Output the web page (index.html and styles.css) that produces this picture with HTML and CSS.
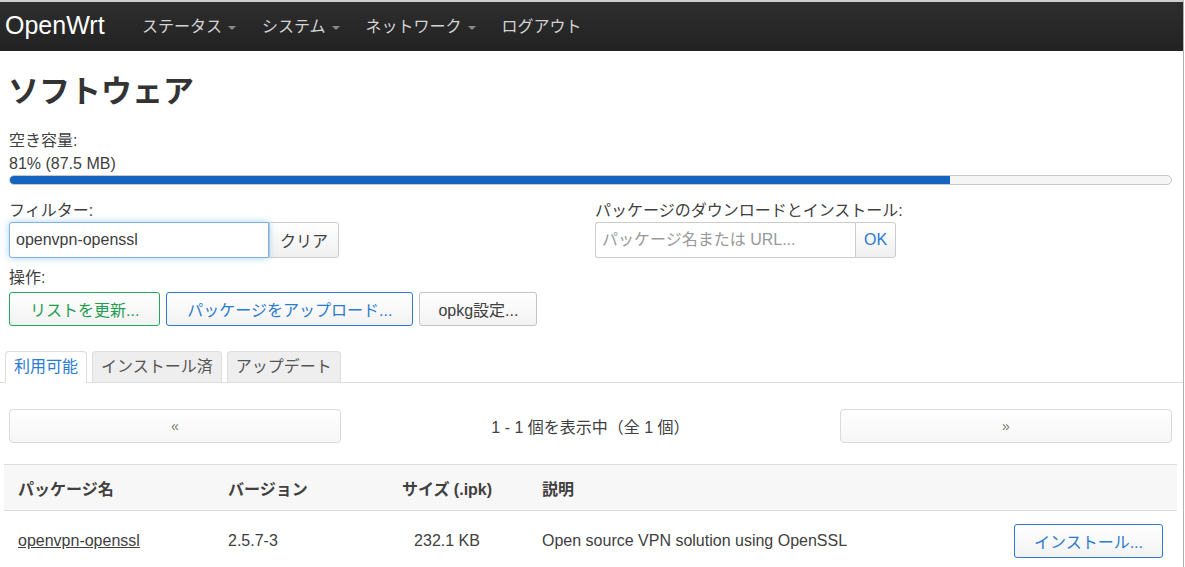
FILE: index.html
```
<!DOCTYPE html>
<html lang="ja">
<head>
<meta charset="utf-8">
<title>ソフトウェア - OpenWrt</title>
<link rel="stylesheet" href="styles.css">
</head>
<body>
<div class="frame">
  <header class="navbar">
    <a class="brand" href="#">OpenWrt</a>
    <ul class="nav">
      <li><span>ステータス</span><i class="caret"></i></li>
      <li><span>システム</span><i class="caret"></i></li>
      <li><span>ネットワーク</span><i class="caret"></i></li>
      <li><span>ログアウト</span></li>
    </ul>
  </header>
  <main class="main">
    <h2 class="title">ソフトウェア</h2>
    <div class="storage">
      <div class="lbl">空き容量:</div>
      <div class="lbl">81% (87.5 MB)</div>
      <div class="bar"><div class="fill" style="width:81%"></div></div>
    </div>
    <div class="controls">
      <div class="ctl">
        <div class="lbl">フィルター:</div>
        <div class="group">
          <input class="inp focus" type="text" value="openvpn-openssl">
          <button class="addon">クリア</button>
        </div>
      </div>
      <div class="ctl">
        <div class="lbl">パッケージのダウンロードとインストール:</div>
        <div class="group">
          <input class="inp" type="text" placeholder="パッケージ名または URL...">
          <button class="addon blue">OK</button>
        </div>
      </div>
    </div>
    <div class="actions">
      <div class="lbl">操作:</div>
      <div class="btns">
        <button class="btn green">リストを更新...</button>
        <button class="btn blue">パッケージをアップロード...</button>
        <button class="btn gray">opkg設定...</button>
      </div>
    </div>
    <ul class="tabs">
      <li class="tab active">利用可能</li>
      <li class="tab">インストール済</li>
      <li class="tab">アップデート</li>
    </ul>
    <div class="pager">
      <button class="pbtn">&laquo;</button>
      <div class="pinfo">1 - 1 個を表示中（全 1 個）</div>
      <button class="pbtn">&raquo;</button>
    </div>
    <table class="pkgs">
      <colgroup>
        <col class="c1"><col class="c2"><col class="c3"><col class="c4"><col class="c5">
      </colgroup>
      <thead>
        <tr><th>パッケージ名</th><th>バージョン</th><th class="ctr">サイズ (.ipk)</th><th>説明</th><th></th></tr>
      </thead>
      <tbody>
        <tr>
          <td><a href="#" class="plink">openvpn-openssl</a></td>
          <td>2.5.7-3</td>
          <td class="ctr">232.1 KB</td>
          <td>Open source VPN solution using OpenSSL</td>
          <td class="right"><button class="btn blue install">インストール...</button></td>
        </tr>
      </tbody>
    </table>
  </main>
</div>
</body>
</html>
```
FILE: styles.css
```
html, body {
  margin: 0;
  padding: 0;
  background: #fff;
}
body {
  font-family: "Liberation Sans", Arial, "Noto Sans CJK JP", sans-serif;
  font-size: 16px;
  color: #404040;
}
.frame {
  width: 1183px;
  min-height: 565px;
  border-top: 2px solid #cfcfcf;
  border-right: 1px solid #b0b0b0;
  overflow: hidden;
}
.navbar {
  height: 49px;
  background: linear-gradient(#2e2e2e, #222);
  display: flex;
  align-items: center;
}
.brand {
  color: #fff;
  text-decoration: none;
  font-size: 25px;
  padding-left: 5px;
  width: 124px;
  line-height: 30px;
  margin-top: -3px;
}
.nav {
  list-style: none;
  margin: 0;
  padding: 0;
  display: flex;
}
.nav li {
  padding: 0 13px;
  color: #d4d4d4;
  display: flex;
  align-items: center;
  line-height: 24px;
}
.caret {
  display: inline-block;
  width: 0;
  height: 0;
  border-left: 4px solid transparent;
  border-right: 4px solid transparent;
  border-top: 4px solid #8a8a8a;
  margin-left: 6px;
  margin-top: 2px;
}
.main {
  padding: 0 11px 0 9px;
}
.title {
  margin: 23px 0 0 -1px;
  font-size: 31px;
  line-height: 36px;
  font-weight: 700;
  color: #333;
}
.lbl {
  line-height: 23px;
}
.storage {
  margin-top: 19px;
}
.bar {
  height: 8px;
  border: 1px solid #c8c8c8;
  border-radius: 5px;
  background: #f5f5f5;
  overflow: hidden;
}
.fill {
  height: 100%;
  background: #1565c0;
}
.controls {
  display: grid;
  grid-template-columns: 1fr 1fr;
  column-gap: 9px;
  margin-top: 14px;
}
.group {
  display: flex;
}
.inp {
  box-sizing: border-box;
  width: 260px;
  height: 36px;
  border: 1px solid #ccc;
  border-right: none;
  border-radius: 3px 0 0 3px;
  padding: 0 6px;
  font-family: inherit;
  font-size: 16px;
  color: #404040;
  outline: none;
}
.inp::placeholder {
  color: #999;
}
.inp.focus {
  border: 1px solid #7db3ea;
  box-shadow: 0 0 7px rgba(102, 175, 233, 0.55);
  position: relative;
  z-index: 1;
}
.addon {
  box-sizing: border-box;
  height: 36px;
  padding: 0 10px;
  border: 1px solid #ccc;
  border-radius: 0 3px 3px 0;
  background: linear-gradient(#fff, #f0f0f0);
  font-family: inherit;
  font-size: 16px;
  color: #404040;
  white-space: nowrap;
}
.addon.blue {
  color: #2a7ad2;
  padding: 0 8px;
}
.actions {
  margin-top: 8px;
}
.btns {
  display: flex;
  gap: 6px;
  margin-top: 3px;
}
.btn {
  box-sizing: border-box;
  height: 34px;
  padding: 0 20px;
  border: 1px solid #c4c4c4;
  border-radius: 3px;
  background: linear-gradient(#fff, #f2f2f2);
  font-family: inherit;
  font-size: 16px;
  color: #404040;
  white-space: nowrap;
}
.btn.gray {
  padding: 0 18px;
}
.btn.green {
  border-color: #22a85a;
  color: #1e9e50;
}
.btn.blue {
  border-color: #2a7ad2;
  color: #2a7ad2;
}
.btn.install {
  width: 149px;
  padding: 0;
}
.tabs {
  list-style: none;
  margin: 25px -11px 0 -9px;
  padding: 0 0 0 5px;
  display: flex;
  gap: 5px;
  border-bottom: 1px solid #ddd;
}
.tab {
  box-sizing: border-box;
  height: 31px;
  line-height: 29px;
  padding: 0 8px;
  border: 1px solid #ddd;
  border-bottom: none;
  border-radius: 4px 4px 0 0;
  background: #eee;
  color: #555;
  margin-bottom: -1px;
  white-space: nowrap;
}
.tab.active {
  background: #fff;
  color: #2a7ad2;
  height: 32px;
}
.pager {
  display: grid;
  grid-template-columns: 332px 1fr 332px;
  align-items: center;
  margin-top: 26px;
}
.pbtn {
  height: 34px;
  border: 1px solid #dadada;
  border-radius: 4px;
  background: linear-gradient(#fff, #f6f6f6);
  color: #777;
  font-family: inherit;
  font-size: 14px;
}
.pinfo {
  text-align: center;
}
.pkgs {
  width: 1173px;
  margin: 21px -5px 0 -5px;
  border-collapse: collapse;
  table-layout: fixed;
}
.c1 { width: 210px; }
.c2 { width: 152px; }
.c3 { width: 162px; }
.c5 { width: 177px; }
.pkgs th {
  height: 45px;
  background: #f7f7f7;
  border-top: 1px solid #ddd;
  border-bottom: 1px solid #ddd;
  text-align: left;
  padding: 0 14px;
  font-weight: 700;
}
.pkgs td {
  padding: 13px 14px;
  height: 34px;
}
.pkgs .ctr {
  text-align: center;
}
.pkgs .right {
  text-align: right;
}
.plink {
  color: #404040;
  text-decoration: underline;
}
```
